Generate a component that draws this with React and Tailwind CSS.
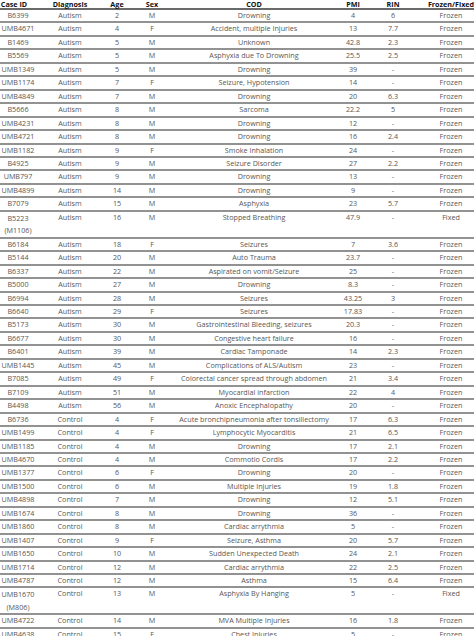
import React from 'react';

const rows = [
  ['B6399', 'Autism', '2', 'M', 'Drowning', '4', '6', 'Frozen'],
  ['UMB4671', 'Autism', '4', 'F', 'Accident, multiple Injuries', '13', '7.7', 'Frozen'],
  ['B1469', 'Autism', '5', 'M', 'Unknown', '42.8', '2.3', 'Frozen'],
  ['B5569', 'Autism', '5', 'M', 'Asphyxia due To Drowning', '25.5', '2.5', 'Frozen'],
  ['UMB1349', 'Autism', '5', 'M', 'Drowning', '39', '-', 'Frozen'],
  ['UMB1174', 'Autism', '7', 'F', 'Seizure, Hypotension', '14', '-', 'Frozen'],
  ['UMB4849', 'Autism', '7', 'M', 'Drowning', '20', '6.3', 'Frozen'],
  ['B5666', 'Autism', '8', 'M', 'Sarcoma', '22.2', '5', 'Frozen'],
  ['UMB4231', 'Autism', '8', 'M', 'Drowning', '12', '-', 'Frozen'],
  ['UMB4721', 'Autism', '8', 'M', 'Drowning', '16', '2.4', 'Frozen'],
  ['UMB1182', 'Autism', '9', 'F', 'Smoke Inhalation', '24', '-', 'Frozen'],
  ['B4925', 'Autism', '9', 'M', 'Seizure Disorder', '27', '2.2', 'Frozen'],
  ['UMB797', 'Autism', '9', 'M', 'Drowning', '13', '-', 'Frozen'],
  ['UMB4899', 'Autism', '14', 'M', 'Drowning', '9', '-', 'Frozen'],
  ['B7079', 'Autism', '15', 'M', 'Asphyxia', '23', '5.7', 'Frozen'],
  ['B5223|(M1106)', 'Autism', '16', 'M', 'Stopped Breathing', '47.9', '-', 'Fixed'],
  ['B6184', 'Autism', '18', 'F', 'Seizures', '7', '3.6', 'Frozen'],
  ['B5144', 'Autism', '20', 'M', 'Auto Trauma', '23.7', '-', 'Frozen'],
  ['B6337', 'Autism', '22', 'M', 'Aspirated on vomit/Seizure', '25', '-', 'Frozen'],
  ['B5000', 'Autism', '27', 'M', 'Drowning', '8.3', '-', 'Frozen'],
  ['B6994', 'Autism', '28', 'M', 'Seizures', '43.25', '3', 'Frozen'],
  ['B6640', 'Autism', '29', 'F', 'Seizures', '17.83', '-', 'Frozen'],
  ['B5173', 'Autism', '30', 'M', 'Gastrointestinal Bleeding, seizures', '20.3', '-', 'Frozen'],
  ['B6677', 'Autism', '30', 'M', 'Congestive heart failure', '16', '-', 'Frozen'],
  ['B6401', 'Autism', '39', 'M', 'Cardiac Tamponade', '14', '2.3', 'Frozen'],
  ['UMB1445', 'Autism', '45', 'M', 'Complications of ALS/Autism', '23', '-', 'Frozen'],
  ['B7085', 'Autism', '49', 'F', 'Colorectal cancer spread through abdomen', '21', '3.4', 'Frozen'],
  ['B7109', 'Autism', '51', 'M', 'Myocardial infarction', '22', '4', 'Frozen'],
  ['B4498', 'Autism', '56', 'M', 'Anoxic Encephalopathy', '20', '-', 'Frozen'],
  ['B6736', 'Control', '4', 'F', 'Acute bronchipneumonia after tonsillectomy', '17', '6.3', 'Frozen'],
  ['UMB1499', 'Control', '4', 'F', 'Lymphocytic Myocarditis', '21', '6.5', 'Frozen'],
  ['UMB1185', 'Control', '4', 'M', 'Drowning', '17', '2.1', 'Frozen'],
  ['UMB4670', 'Control', '4', 'M', 'Commotio Cordis', '17', '2.2', 'Frozen'],
  ['UMB1377', 'Control', '6', 'F', 'Drowning', '20', '-', 'Frozen'],
  ['UMB1500', 'Control', '6', 'M', 'Multiple Injuries', '19', '1.8', 'Frozen'],
  ['UMB4898', 'Control', '7', 'M', 'Drowning', '12', '5.1', 'Frozen'],
  ['UMB1674', 'Control', '8', 'M', 'Drowning', '36', '-', 'Frozen'],
  ['UMB1860', 'Control', '8', 'M', 'Cardiac arrythmia', '5', '-', 'Frozen'],
  ['UMB1407', 'Control', '9', 'F', 'Seizure, Asthma', '20', '5.7', 'Frozen'],
  ['UMB1650', 'Control', '10', 'M', 'Sudden Unexpected Death', '24', '2.1', 'Frozen'],
  ['UMB1714', 'Control', '12', 'M', 'Cardiac arrythmia', '22', '2.5', 'Frozen'],
  ['UMB4787', 'Control', '12', 'M', 'Asthma', '15', '6.4', 'Frozen'],
  ['UMB1670|(M806)', 'Control', '13', 'M', 'Asphyxia By Hanging', '5', '-', 'Fixed'],
  ['UMB4722', 'Control', '14', 'M', 'MVA Multiple Injuries', '16', '1.8', 'Frozen'],
  ['UMB4638', 'Control', '15', 'F', 'Chest Injuries', '5', '-', 'Frozen'],
];

const widths = ['w-[34px]', 'w-[70px]', 'w-[24px]', 'w-[46px]', 'w-[158px]', 'w-[40px]', 'w-[40px]', 'w-[76px]'];
const headers = ['Case ID', 'Diagnosis', 'Age', 'Sex', 'COD', 'PMI', 'RIN', 'Frozen/Fixed'];

export default function App() {
  return (
    <div className="w-[474px] h-[636px] overflow-hidden bg-white text-[7.2px] text-[#575757] font-['Open_Sans',sans-serif]">
      {/* header row, sits tight against the top edge */}
      <div className="flex pl-px border-b-2 border-[#6a6a6a] leading-[8px] font-bold text-[#111]">
        {headers.map((h, i) => (
          <div key={h} className={`${widths[i]} shrink-0 flex justify-center whitespace-nowrap ${i === 0 ? 'pr-2' : ''}`}>
            {h}
          </div>
        ))}
      </div>

      {rows.map((r) => {
        const ids = r[0].split('|');
        return (
          <div key={r[0]} className="flex items-start pl-px border-b-2 border-[#929292] leading-[11.45px]">
            {r.map((cell, i) => (
              <div key={i} className={`${widths[i]} shrink-0 flex flex-col items-center whitespace-nowrap`}>
                {i === 0 && ids.length > 1
                  ? ids.map((s) => (
                      <span key={s} className="leading-[12.45px]">{s}</span>
                    ))
                  : cell}
              </div>
            ))}
          </div>
        );
      })}
    </div>
  );
}
